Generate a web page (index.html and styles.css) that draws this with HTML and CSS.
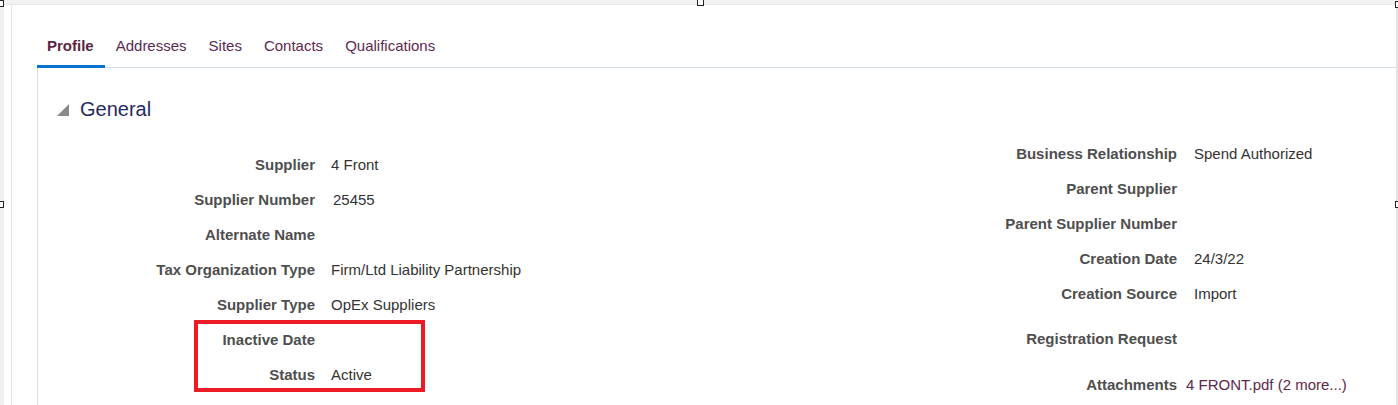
FILE: index.html
```html
<!DOCTYPE html>
<html lang="en">
<head>
  <meta charset="UTF-8">
  <meta name="viewport" content="width=device-width, initial-scale=1.0">
  <title>Supplier Profile</title>
  <link rel="stylesheet" href="styles.css">
</head>
<body>
  <div class="page">
    <div class="topbar"></div>
    <div class="frame">
      <div class="gutter-left"></div>
      <div class="canvas">
        <div class="canvas-inner">
          <nav class="tabs">
            <a class="tab active">Profile</a>
            <a class="tab">Addresses</a>
            <a class="tab">Sites</a>
            <a class="tab">Contacts</a>
            <a class="tab">Qualifications</a>
          </nav>
          <section class="panel">
            <h2 class="section-title">
              <svg class="disclosure" width="12" height="12" viewBox="0 0 12 12"><polygon points="0,12 12,0 12,12" fill="#8a8a8a"/></svg>
              General
            </h2>
            <div class="form">
              <div class="form-col left">
                <div class="row"><span class="label">Supplier</span><span class="value">4 Front</span></div>
                <div class="row"><span class="label">Supplier Number</span><span class="value shift">25455</span></div>
                <div class="row"><span class="label">Alternate Name</span><span class="value"></span></div>
                <div class="row"><span class="label">Tax Organization Type</span><span class="value">Firm/Ltd Liability Partnership</span></div>
                <div class="row"><span class="label">Supplier Type</span><span class="value">OpEx Suppliers</span></div>
                <div class="row"><span class="label">Inactive Date</span><span class="value"></span></div>
                <div class="row"><span class="label">Status</span><span class="value">Active</span></div>
              </div>
              <div class="form-col right">
                <div class="row"><span class="label">Business Relationship</span><span class="value">Spend Authorized</span></div>
                <div class="row"><span class="label">Parent Supplier</span><span class="value"></span></div>
                <div class="row"><span class="label">Parent Supplier Number</span><span class="value"></span></div>
                <div class="row"><span class="label">Creation Date</span><span class="value">24/3/22</span></div>
                <div class="row"><span class="label">Creation Source</span><span class="value">Import</span></div>
                <div class="row tall"><span class="label">Registration Request</span><span class="value"></span></div>
                <div class="row attach"><span class="label">Attachments</span><a class="value link">4 FRONT.pdf (2 more...)</a></div>
              </div>
            </div>
          </section>
        </div>
      </div>
      <div class="gutter-right"></div>
    </div>

    <!-- annotation + selection handles drawn over the screenshot -->
    <div class="annotation"></div>
    <span class="handle h-tl"></span>
    <span class="handle h-tc"></span>
    <span class="handle h-tr"></span>
    <span class="handle h-ml"></span>
    <span class="handle h-mr"></span>
  </div>
</body>
</html>
```

FILE: styles.css
```css
html, body {
  margin: 0;
  padding: 0;
  height: 100%;
  overflow: hidden;
}
body {
  font-family: "Liberation Sans", Arial, sans-serif;
  background: #fff;
  color: #333;
}
.page {
  position: relative;
  height: 100vh;
  display: flex;
  flex-direction: column;
}
.topbar {
  height: 4px;
  background: #f2f2f2;
  border-bottom: 1px solid #e6e6e6;
}
.frame {
  flex: 1;
  display: flex;
}
.gutter-left {
  width: 4px;
  background: #f0f0f0;
}
.gutter-right {
  width: 2px;
  background: #e4e4e4;
}
.canvas {
  flex: 1;
  padding-left: 7px;
}
.canvas-inner {
  height: 100%;
  border-left: 1px solid #dfe5eb;
  padding-left: 25px;
  display: flex;
  flex-direction: column;
}
.tabs {
  display: flex;
  padding-top: 31px;
  border-bottom: 1px solid #d6dfe6;
}
.tab {
  font-size: 15px;
  line-height: 20px;
  padding: 0 11px 9px 10px;
  margin-right: 1px;
  margin-bottom: -1px;
  border-bottom: 3px solid transparent;
  color: #5c2a50;
  cursor: pointer;
}
.tab.active {
  font-weight: bold;
  color: #5a2640;
  border-bottom-color: #0572ce;
}
.panel {
  flex: 1;
  border-left: 1px solid #d6dfe6;
  padding: 29px 0 0 19px;
}
.section-title {
  margin: 0;
  display: flex;
  align-items: center;
  gap: 11px;
  font-size: 20px;
  font-weight: normal;
  line-height: 24px;
  color: #262b5e;
}
.disclosure {
  margin-top: 2px;
}
.form {
  display: flex;
  margin-top: 15px;
}
.form-col {
  display: flex;
  flex-direction: column;
}
.form-col.left {
  width: 780px;
  padding-top: 11px;
}
.row {
  display: flex;
  align-items: center;
  height: 35px;
  font-size: 15px;
}
.row.tall {
  height: 55px;
}
.row.attach {
  padding-top: 1px;
}
.label {
  font-weight: bold;
  color: #4e4e4e;
  text-align: right;
}
.left .label {
  width: 258px;
  margin-right: 16px;
}
.right .label {
  width: 340px;
  margin-right: 17px;
}
.value {
  color: #333;
}
.value.shift {
  margin-left: 2px;
}
.value.link {
  margin-left: -8px;
  color: #5e2749;
  cursor: pointer;
}
.annotation {
  position: absolute;
  left: 194px;
  top: 320px;
  width: 231px;
  height: 72px;
  box-sizing: border-box;
  border: 4px solid #ed1c24;
}
.handle {
  position: absolute;
  width: 5px;
  height: 5px;
  border: 1px solid #222;
  background: #fff;
}
.h-tl { left: -3px; top: 0; }
.h-tc { left: 697px; top: -1px; }
.h-tr { left: 1395px; top: 1px; }
.h-ml { left: -3px; top: 201px; }
.h-mr { left: 1395px; top: 201px; }
```
